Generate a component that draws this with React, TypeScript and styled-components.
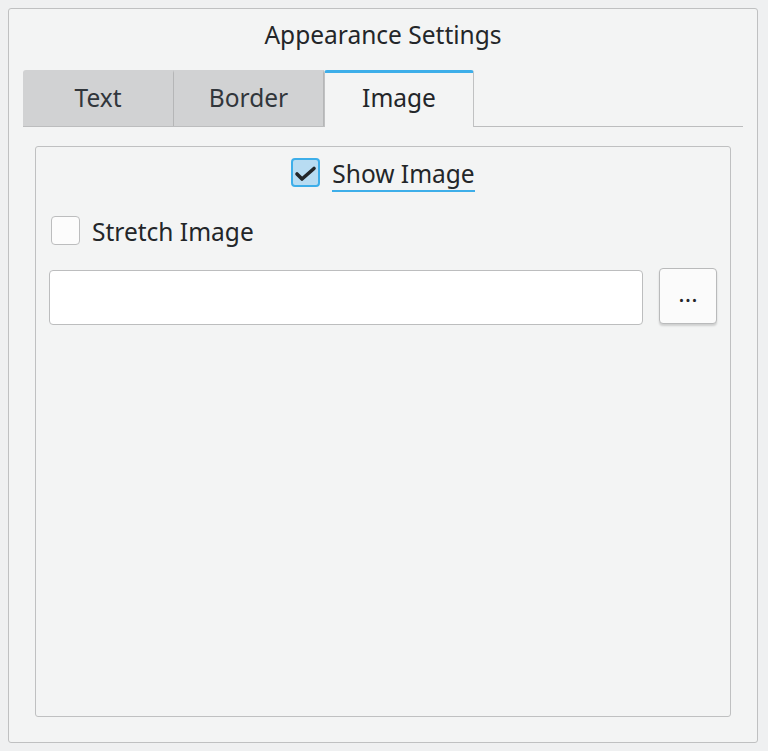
import styled, { createGlobalStyle, css } from 'styled-components';

const GlobalStyle = createGlobalStyle`
  html, body {
    margin: 0;
    padding: 0;
    background: #eff0f1;
    font-family: 'Noto Sans', 'Open Sans', sans-serif;
    color: #232629;
  }
`;

const Frame = styled.div`
  box-sizing: border-box;
  margin: 8px 0 0 8px;
  width: 750px;
  height: 735px;
  padding: 0 14px;
  border: 1px solid #bfc0c1;
  border-radius: 3px;
  background: #f3f4f4;

  display: flex;
  flex-direction: column;
`;

const Title = styled.div`
  padding: 9px 0 18px;
  font-size: 24.5px;
  line-height: 34px;
  text-align: center;
`;

const TabBar = styled.div`
  box-sizing: border-box;
  height: 57px;
  border-bottom: 1px solid #bcbdbe;

  display: flex;
  align-items: stretch;
`;

interface TabProps {
  active?: boolean;
}

const Tab = styled.div<TabProps>`
  box-sizing: border-box;
  width: 150px;
  padding-top: 9px;
  border-top: 3px solid transparent;
  background: #d1d2d3;
  border-right: 1px solid #b5b6b7;

  font-size: 24.5px;
  line-height: 32px;
  text-align: center;
  color: #31363b;

  &:first-child {
    width: 151px;
    border-top-left-radius: 3px;
  }

  ${(props) =>
    props.active &&
    css`
      width: 150px;
      margin-bottom: -1px;
      background: #f3f4f4;
      border-top-color: #3daee9;
      border-left: 1px solid #c0c1c2;
      border-right: 1px solid #c0c1c2;
      border-radius: 3px 3px 0 0;
      color: #232629;
    `}
`;

const Panel = styled.div`
  flex: 1;
  margin: 19px 12px 25px;
  padding: 11px 13px 0;
  border: 1px solid #bfc0c1;
  border-radius: 3px;

  display: flex;
  flex-direction: column;
`;

interface RowProps {
  centered?: boolean;
}

const CheckRow = styled.div<RowProps>`
  display: flex;
  align-items: flex-start;
  justify-content: ${(props) => (props.centered ? 'center' : 'flex-start')};
  padding-left: ${(props) => (props.centered ? '0' : '2px')};

  & + & {
    margin-top: 24px;
  }
`;

interface BoxProps {
  checked?: boolean;
}

const CheckBox = styled.span<BoxProps>`
  box-sizing: border-box;
  width: 29px;
  height: 29px;
  border: 1px solid #bcbdbe;
  border-radius: 4px;
  background: #fcfcfc;

  display: flex;
  align-items: center;
  justify-content: center;

  ${(props) =>
    props.checked &&
    css`
      border: 2px solid #3daee9;
      background: #b8dcf2;
    `}

  svg {
    width: 25px;
    height: 25px;
  }
`;

interface LabelProps {
  focused?: boolean;
}

const Label = styled.span<LabelProps>`
  margin-left: 12px;
  font-size: 24.5px;
  line-height: 32px;
  border-bottom: 2px solid ${(props) => (props.focused ? '#3daee9' : 'transparent')};
`;

const FileRow = styled.div`
  margin-top: 18px;
  display: flex;
  align-items: flex-start;
  gap: 16px;
`;

const LineEdit = styled.div`
  box-sizing: border-box;
  flex: 1;
  height: 55px;
  margin-top: 2px;
  border: 1px solid #bcbdbe;
  border-radius: 4px;
  background: #ffffff;
`;

const BrowseButton = styled.div`
  box-sizing: border-box;
  width: 58px;
  height: 56px;
  border: 1px solid #b9babb;
  border-radius: 4px;
  background: #fbfbfb;
  box-shadow: 0 2px 2px rgba(0, 0, 0, 0.15);

  display: flex;
  align-items: center;
  justify-content: center;

  font-size: 24px;
  line-height: 32px;
  padding-bottom: 6px;
  color: #232629;
`;

const CheckMark = () => (
  <svg viewBox="0 0 25 25">
    <path
      d="M4 14 L9 19 L21 8.5"
      fill="none"
      stroke="#232629"
      strokeWidth="3.6"
      strokeLinecap="round"
      strokeLinejoin="round"
    />
  </svg>
);

const App = () => {
  return (
    <>
      <GlobalStyle />
      <Frame>
        <Title>Appearance Settings</Title>
        <TabBar>
          <Tab>Text</Tab>
          <Tab>Border</Tab>
          <Tab active>Image</Tab>
        </TabBar>
        <Panel>
          <CheckRow centered>
            <CheckBox checked>
              <CheckMark />
            </CheckBox>
            <Label focused>Show Image</Label>
          </CheckRow>
          <CheckRow>
            <CheckBox />
            <Label>Stretch Image</Label>
          </CheckRow>
          <FileRow>
            <LineEdit />
            <BrowseButton>...</BrowseButton>
          </FileRow>
        </Panel>
      </Frame>
    </>
  );
};

export default App;
